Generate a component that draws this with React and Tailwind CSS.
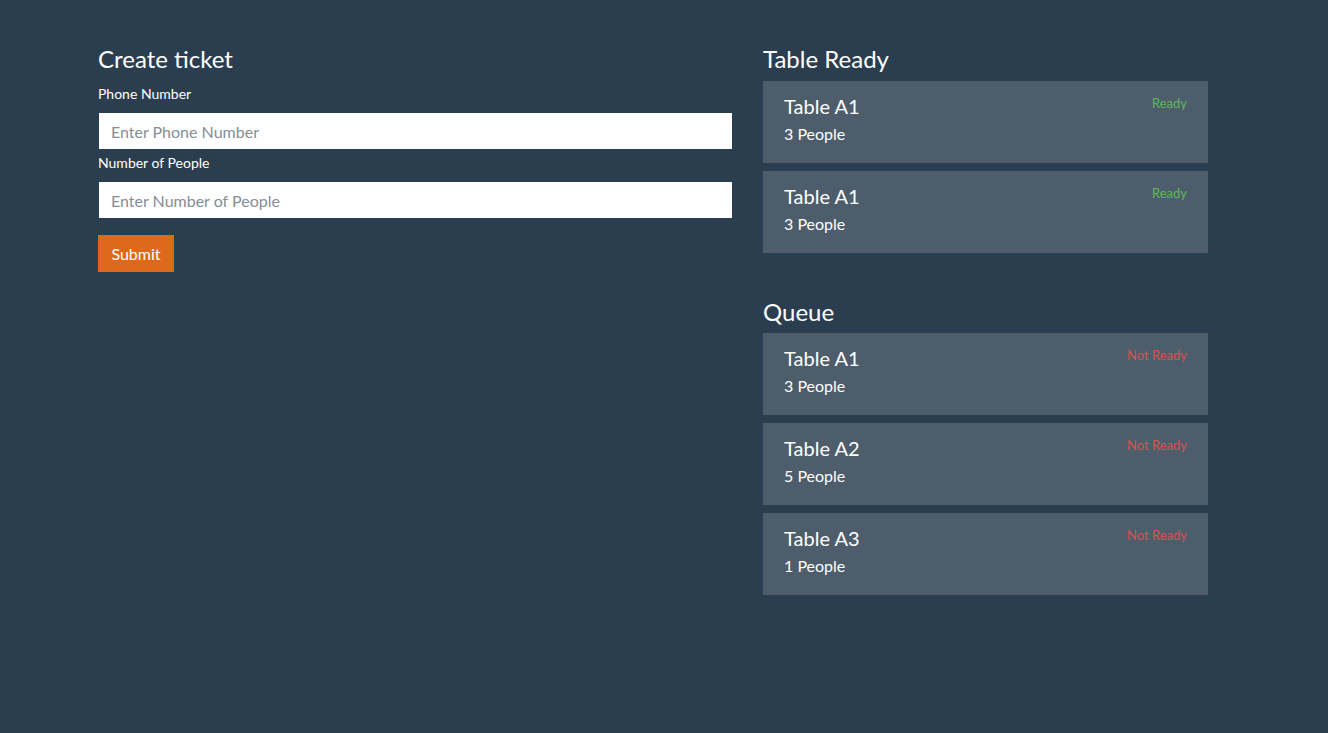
const ready = [
  { name: "Table A1", people: 3 },
  { name: "Table A1", people: 3 },
]

const queue = [
  { name: "Table A1", people: 3 },
  { name: "Table A2", people: 5 },
  { name: "Table A3", people: 1 },
]

function TableCard({ name, people, isReady }) {
  return (
    <div className="relative bg-[#4e5d6c] h-[82px] mb-[8px] px-[21px] pt-[11px]">
      <div className="text-[20px] leading-[28px] text-white">{name}</div>
      <div className="text-[16px] leading-[20px] mt-[4px] text-white">{people} People</div>
      <span
        className={
          "absolute right-[21px] top-[13px] text-[13px] leading-[18px] " +
          (isReady ? "text-[#5cb85c]" : "text-[#d9534f]")
        }
      >
        {isReady ? "Ready" : "Not Ready"}
      </span>
    </div>
  )
}

export default function App() {
  return (
    <div
      className="min-h-screen bg-[#2b3e50] text-white pt-[43px] pl-[98px]"
      style={{ fontFamily: "Lato, 'Open Sans', sans-serif" }}
    >
      <div className="flex gap-[31px]">
        <div className="w-[634px]">
          <h2 className="text-[24px] leading-[32px]">Create ticket</h2>
          <label className="block text-[14px] leading-[18px] mt-[10px]">Phone Number</label>
          <input
            className="block ml-[1px] w-[633px] h-[36px] mt-[10px] bg-white px-[12px] pt-[1px] text-[16px] text-gray-800 placeholder:text-[#868e96] outline-none"
            placeholder="Enter Phone Number"
          />
          <label className="block text-[14px] leading-[18px] mt-[5px]">Number of People</label>
          <input
            className="block ml-[1px] w-[633px] h-[36px] mt-[10px] bg-white px-[12px] pt-[1px] text-[16px] text-gray-800 placeholder:text-[#868e96] outline-none"
            placeholder="Enter Number of People"
          />
          <button className="mt-[17px] h-[37px] w-[76px] pt-[1px] bg-[#df691a] text-[16px] text-white">
            Submit
          </button>
        </div>

        <div className="w-[445px]">
          <h2 className="text-[24px] leading-[32px]">Table Ready</h2>
          <div className="mt-[6px]">
            {ready.map((t, i) => (
              <TableCard key={i} {...t} isReady />
            ))}
          </div>

          <h2 className="text-[24px] leading-[32px] mt-[43px]">Queue</h2>
          <div className="mt-[5px]">
            {queue.map((t, i) => (
              <TableCard key={i} {...t} isReady={false} />
            ))}
          </div>
        </div>
      </div>
    </div>
  )
}
